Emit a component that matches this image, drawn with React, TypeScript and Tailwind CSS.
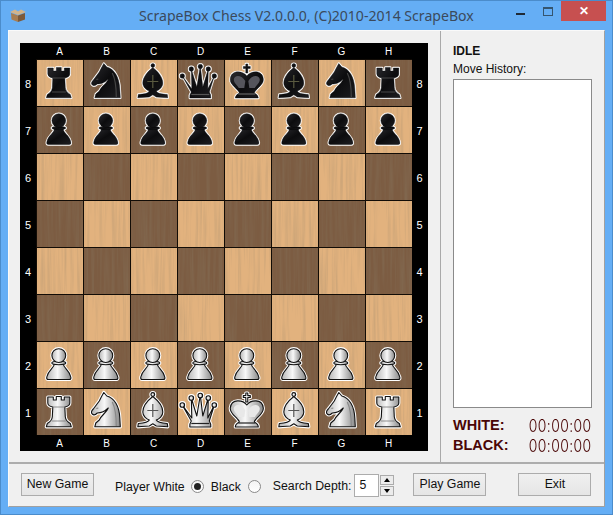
import React from "react";

type Kind = "r" | "n" | "b" | "q" | "k" | "p";
const SHAPES: Record<Kind, React.ReactNode> = {
  p: (
    <>
      <path d="M19 23C19 27 13 29 11.5 36Q11 38.5 13 38.5L34 38.5Q36 38.5 35.5 36C34 29 28 27 28 23Z" />
      <ellipse cx="23.5" cy="22" rx="7" ry="1.7" />
      <circle cx="23.5" cy="14.6" r="6.9" />
    </>
  ),
  r: (
    <path d="M12.5 9L18 9L18 12L21 12L21 8.5L26 8.5L26 12L29 12L29 9L34.5 9L34.5 15Q34.5 18 29.5 19L30 29Q30.5 33 35 35.5L36 38.8L11 38.8L12 35.5Q16.5 33 17 29L17.5 19Q12.5 18 12.5 15Z" />
  ),
  n: (
    <path d="M21.5 4.5L24.5 8C32 10 37 18 37.5 30L38 38.8L12.5 38.8L13.5 35L17 32C19 27 24 25 26 20C22 24 19 25 15 25C13 27 11 27 10 26C8.5 25 9 23 11 21L17 13L19 9Z" />
  ),
  b: (
    <>
      <circle cx="23.5" cy="6.5" r="1.9" />
      <path d="M23.5 8.5C19 12 13.5 18 13.5 24C13.5 28 17 31 20 32C19 34.5 15 35 9 35.5L8.5 38.8L20 38L23.5 35.8L27 38L38.5 38.8L38 35.5C32 35 28 34.5 27 32C30 31 33.5 28 33.5 24C33.5 18 28 12 23.5 8.5Z" />
    </>
  ),
  q: (
    <>
      <path d="M6 17L15.5 30L15 10L20.5 28L24 7L26.5 28L32 10L31.5 30L38 17L33 33Q35 36 34.5 39L13.5 39Q13 36 15 33Z" />
      <circle cx="6" cy="17" r="2.3" />
      <circle cx="15" cy="10" r="2.3" />
      <circle cx="24" cy="7.5" r="2.3" />
      <circle cx="32" cy="10" r="2.3" />
      <circle cx="38" cy="17" r="2.3" />
    </>
  ),
  k: (
    <>
      <path d="M22.5 5H24.5V7.5H27V9.5H24.5V14H22.5V9.5H20V7.5H22.5Z" />
      <path d="M23.5 17C20 12 8 10 7 20C6.5 25 12 28 14.5 31.5Q16 33 16 34Q12 36 12 39L35 39Q35 36 31 34Q31 33 32.5 31.5C35 28 40.5 25 40 20C39 10 27 12 23.5 17Z" />
    </>
  ),
};

const EXTRAS: Record<Kind, (white: boolean) => React.ReactNode> = {
  p: () => null,
  r: (w) => <path d="M17 19H30M16.5 33H30.5" fill="none" stroke={w ? "#777" : "#555"} strokeWidth="0.8" />,
  n: (w) => <path d="M30 14C33 20 34 30 34 38M14 20.5L16 20" fill="none" stroke={w ? "#888" : "#444"} strokeWidth="1.2" />,
  b: (w) => <path d="M23.5 16V29M18 22.5H29" fill="none" stroke={w ? "#555" : "#5a5a40"} strokeWidth="1.2" />,
  q: (w) => <path d="M15 35.5H33" fill="none" stroke={w ? "#222" : "#555"} strokeWidth="1.2" />,
  k: (w) => (
    <>
      <path d="M22 22C19 16 11 15 10.5 20.5C10.5 24 14 26 15.5 29L21 29Z" fill={w ? "#e8e8e8" : "#55555c"} stroke="none" />
      <path d="M25 22C28 16 36 15 36.5 20.5C36.5 24 33 26 31.5 29L26 29Z" fill={w ? "#e8e8e8" : "#55555c"} stroke="none" />
      <path d="M15 35H32" fill="none" stroke={w ? "#222" : "#666"} strokeWidth="1.2" />
    </>
  ),
};

function Piece({ kind, white }: { kind: Kind; white: boolean }) {
  return (
    <svg viewBox="0.7 0 47 47" className="absolute -left-px -top-px h-[47px] w-[47px]">
      <g fill="#fff" stroke="#fff" strokeWidth={white ? 3.2 : 2.4} strokeLinejoin="round">
        {SHAPES[kind]}
      </g>
      <g fill={white ? "url(#wp)" : "url(#bp)"} stroke={white ? "#111" : "#000"} strokeWidth={white ? 1.1 : 0.4} strokeLinejoin="round">
        {SHAPES[kind]}
      </g>
      {EXTRAS[kind](white)}
    </svg>
  );
}

const FILES = ["A", "B", "C", "D", "E", "F", "G", "H"];
const BACK: Kind[] = ["r", "n", "b", "q", "k", "b", "n", "r"];

function Square({ light, seed, children }: { light: boolean; seed: number; children?: React.ReactNode }) {
  return (
    <div className={`relative h-[47px] w-[47px] overflow-hidden border-l border-t border-[#120c06] ${light ? "bg-[#e2b27e]" : "bg-[#7c5c42]"}`}>
      <svg className="absolute -left-px -top-px h-[47px] w-[47px]" viewBox="0 0 47 47">
        <filter id={`w${seed}`} x="0" y="0" width="100%" height="100%">
          <feTurbulence type="fractalNoise" baseFrequency="0.35 0.012" numOctaves="3" seed={seed} />
          <feColorMatrix
            values={light ? "0 0 0 0 0.55  0 0 0 0 0.35  0 0 0 0 0.18  1.6 0 0 0 -0.66" : "0 0 0 0 0.22  0 0 0 0 0.14  0 0 0 0 0.08  1.6 0 0 0 -0.58"}
          />
        </filter>
        <rect width="47" height="47" filter={`url(#w${seed})`} />
      </svg>
      {children}
    </div>
  );
}

function Letters() {
  return (
    <div className="flex h-4 pl-4">
      {FILES.map((f) => (
        <div key={f} className="w-[47px] pt-[2px] text-center text-[10px] leading-[14px] text-white">
          {f}
        </div>
      ))}
    </div>
  );
}

function Btn({ label, className }: { label: string; className: string }) {
  return (
    <div className={`flex h-[23px] w-[73px] items-center justify-center border border-[#acacac] bg-gradient-to-b from-[#f0f0f0] to-[#e5e5e5] text-[12.3px] text-[#111] ${className}`}>
      {label}
    </div>
  );
}

function Radio({ checked }: { checked?: boolean }) {
  return (
    <div className="flex h-[13px] w-[13px] items-center justify-center rounded-full border border-[#8a8a8a] bg-gradient-to-b from-[#f4f4f4] to-white">
      {checked && <div className="h-[7px] w-[7px] rounded-full bg-[#222]" />}
    </div>
  );
}

function Timer({ label }: { label: string }) {
  return (
    <div className="flex h-5 items-center justify-between">
      <span className="text-[14.5px] font-bold text-[#4a0606]">{label}</span>
      <span className="origin-right scale-x-[0.82] font-['Inter'] text-[17px] font-light leading-5 tracking-[0.5px] text-[#4a0606]">00:00:00</span>
    </div>
  );
}

export default function App() {
  return (
    <div className="flex h-[515px] w-[613px] flex-col overflow-hidden border border-[#4b8ccb] bg-[#65aef5] font-['Liberation_Sans',sans-serif]">
      <svg width="0" height="0" className="absolute">
        <defs>
          <linearGradient id="wp" x1="0" x2="1" y1="0" y2="0">
            <stop offset="0" stopColor="#b5b5b5" />
            <stop offset="0.45" stopColor="#f8f8f8" />
            <stop offset="1" stopColor="#888" />
          </linearGradient>
          <linearGradient id="bp" x1="0" x2="1" y1="0" y2="1">
            <stop offset="0" stopColor="#2a2a2e" />
            <stop offset="0.5" stopColor="#0c0c0e" />
            <stop offset="1" stopColor="#1d1d20" />
          </linearGradient>
        </defs>
      </svg>
      {/* title bar */}
      <div className="flex h-[29px] shrink-0 items-start">
        <svg width="16" height="13" viewBox="0 0 16 13" className="ml-[9px] mt-[8px] shrink-0">
          <path d="M0 3L5 0.5L8 2.5L11 0.5L16 3L8 6Z" fill="#d3b48a" />
          <path d="M1 4L8 6.5V13L1.5 10.5Z" fill="#a87d50" />
          <path d="M8 6.5L15 4V10.5L8 13Z" fill="#7d5a3a" />
        </svg>
        <div className="flex-1 whitespace-nowrap pt-[5px] pl-[113px] font-['Noto_Sans',sans-serif] text-[14.1px] leading-5 text-[#3b4a5c]">
          ScrapeBox Chess V2.0.0.0, (C)2010-2014 ScrapeBox
        </div>
        <div className="mr-[6px] flex shrink-0 items-start">
          <div className="mr-[18px] mt-[12px] h-[2px] w-[9px] bg-[#1f2a36]" />
          <div className="mr-[8px] mt-[6px] h-[9px] w-[10px] border border-t-2 border-[#35556f]" />
          <div className="flex h-5 w-[45px] items-center justify-center bg-[#c75050] text-[12px] font-bold leading-none text-white">
            ✕
          </div>
        </div>
      </div>
      {/* client */}
      <div className="mx-[7px] flex h-[477px] w-[597px] shrink-0 flex-col border border-b-[#a0a0a0] border-l-[#fafafa] border-r-[#a0a0a0] border-t-[#fafafa] bg-[#f0f0f0]">
        <div className="flex h-[433px] shrink-0 border-b-2 border-[#adadad]">
          <div className="w-[432px] shrink-0 border-r border-[#a9a9a9] pl-[11px] pt-3">
            <div className="h-[408px] w-[408px] bg-black">
              <Letters />
              {[8, 7, 6, 5, 4, 3, 2, 1].map((rank, r) => (
                <div key={rank} className="flex h-[47px]">
                  <div className="flex w-4 items-center justify-center pt-1 text-[11px] text-white">{rank}</div>
                  {FILES.map((f, c) => {
                    const piece =
                      rank === 8 || rank === 1 ? BACK[c] : rank === 7 || rank === 2 ? "p" : null;
                    return (
                      <Square key={f} light={(r + c) % 2 === 0} seed={r * 8 + c + 1}>
                        {piece && <Piece kind={piece} white={rank < 3} />}
                      </Square>
                    );
                  })}
                  <div className="flex w-4 items-center justify-center pr-px pt-1 text-[11px] text-white">{rank}</div>
                </div>
              ))}
              <Letters />
            </div>
          </div>
          <div className="flex-1 pl-3 pr-[12px] pt-[13px]">
            <div className="text-[12px] font-bold leading-[14px] text-[#111]">IDLE</div>
            <div className="mt-[4px] text-[12px] leading-[15px] text-[#111]">Move History:</div>
            <div className="mt-[2px] h-[329px] border border-[#8a8a8a] bg-white" />
            <div className="mt-[8px]">
              <Timer label="WHITE:" />
              <Timer label="BLACK:" />
            </div>
          </div>
        </div>
        <div className="flex items-start pt-[9px]">
          <Btn label="New Game" className="ml-[12px]" />
          <span className="ml-[21px] mt-[7px] text-[12.3px] leading-[15px] text-[#111]">Player White</span>
          <div className="ml-[6px] mt-[7px]"><Radio checked /></div>
          <span className="ml-[7px] mt-[7px] text-[12.3px] leading-[15px] text-[#111]">Black</span>
          <div className="ml-[7px] mt-[7px]"><Radio /></div>
          <span className="ml-[12px] mt-[6px] text-[12.3px] leading-[15px] text-[#111]">Search Depth:</span>
          <div className="ml-[3px] mt-px flex h-[23px] w-[25px] items-center border border-[#acacac] bg-white pl-1 text-[12.3px] text-[#111]">5</div>
          <div className="ml-px mt-[2px] flex w-[14px] flex-col gap-px">
            <div className="flex h-[10px] items-center justify-center border border-[#acacac] bg-[#ececec]">
              <div className="h-0 w-0 border-x-[3px] border-b-[4px] border-x-transparent border-b-black" />
            </div>
            <div className="flex h-[10px] items-center justify-center border border-[#acacac] bg-[#ececec]">
              <div className="h-0 w-0 border-x-[3px] border-t-[4px] border-x-transparent border-t-black" />
            </div>
          </div>
          <Btn label="Play Game" className="ml-[19px]" />
          <Btn label="Exit" className="ml-[32px]" />
        </div>
      </div>
    </div>
  );
}
